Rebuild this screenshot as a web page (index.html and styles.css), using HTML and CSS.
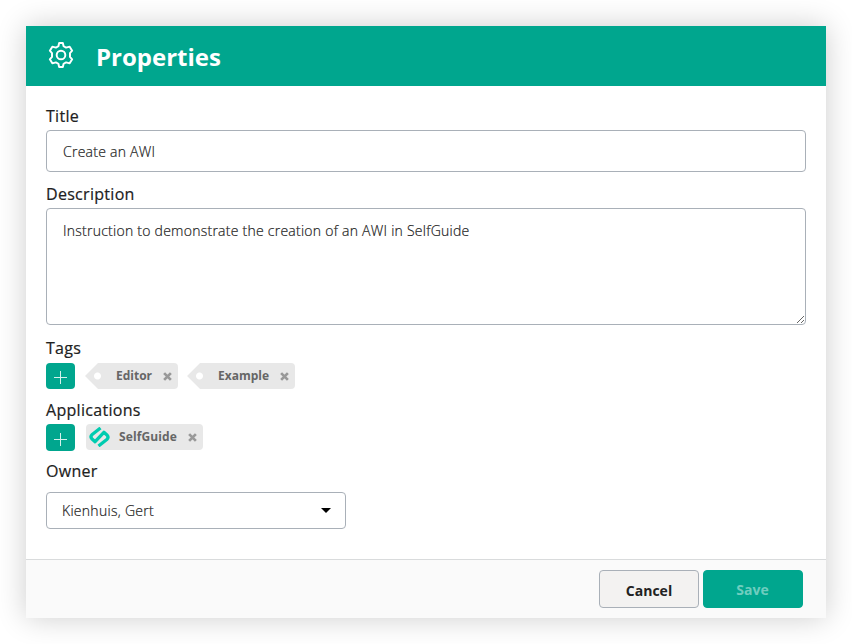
FILE: index.html
```html
<!DOCTYPE html>
<html lang="en">
<head>
  <meta charset="UTF-8">
  <meta name="viewport" content="width=device-width, initial-scale=1">
  <title>Properties</title>
  <link rel="stylesheet" href="styles.css">
</head>
<body>
  <form class="dialog">
    <div class="dialog-header">
      <svg class="gear" viewBox="0 0 24 24" fill="none" stroke="#fff" stroke-width="1.8" stroke-linejoin="round">
        <path d="M10.300 .9h3.400l.7 3 2.300 1.300 3.300-.9 2.300 3.700-2 2.200v3.600l2 2.200-2.300 3.700-3.300-.9-2.300 1.300-.7 3h-3.400l-.7-3-2.300-1.300-3.300.9L1.700 16l2-2.200v-3.600L1.700 8 4 4.300l3.300.9 2.300-1.300z"/>
        <circle cx="12" cy="12" r="4"/>
      </svg>
      <h1 class="dialog-title">Properties</h1>
    </div>

    <div class="dialog-body">
      <label class="label" for="title">Title</label>
      <input class="input" id="title" type="text" value="Create an AWI">

      <label class="label" for="description">Description</label>
      <textarea class="input textarea" id="description">Instruction to demonstrate the creation of an AWI in SelfGuide</textarea>

      <div class="label">Tags</div>
      <div class="chips tags">
        <button type="button" class="add-btn" aria-label="Add tag">
          <svg viewBox="0 0 13 13" stroke="#d5f1ec"><path d="M6.500 0v13M0 6.500h13"/></svg>
        </button>
        <div class="tag">
          <span>Editor</span>
          <svg class="remove" viewBox="0 0 8 8"><path d="M1 1l6 6M7 1L1 7"/></svg>
        </div>
        <div class="tag">
          <span>Example</span>
          <svg class="remove" viewBox="0 0 8 8"><path d="M1 1l6 6M7 1L1 7"/></svg>
        </div>
      </div>

      <div class="label">Applications</div>
      <div class="chips apps">
        <button type="button" class="add-btn" aria-label="Add application">
          <svg viewBox="0 0 13 13" stroke="#d5f1ec"><path d="M6.500 0v13M0 6.500h13"/></svg>
        </button>
        <div class="app">
          <svg class="app-logo" viewBox="0 0 21 20" fill="none" stroke="#00ccb0" stroke-width="3.300" stroke-linejoin="round">
            <path d="M11.500 1L3.200 7.500Q1 9.500 2.800 11.700l3.300 3 8.800-9.400 3.300 3q1.800 2.200-.4 4.200L9.500 19"/>
          </svg>
          <span>SelfGuide</span>
          <svg class="remove" viewBox="0 0 8 8"><path d="M1 1l6 6M7 1L1 7"/></svg>
        </div>
      </div>

      <div class="label">Owner</div>
      <div class="select" tabindex="0">
        <span>Kienhuis, Gert</span>
        <span class="caret"></span>
      </div>
    </div>

    <div class="dialog-footer">
      <button type="button" class="btn cancel">Cancel</button>
      <button type="submit" class="btn save" disabled>Save</button>
    </div>
  </form>
</body>
</html>
```
FILE: styles.css
```css
* {
  box-sizing: border-box;
}
body {
  margin: 0;
  padding: 26px;
  height: 644px;
  background: #fff;
  color: #212121;
  font-family: "Open Sans", sans-serif;
  overflow: hidden;
}
.dialog {
  display: flex;
  flex-direction: column;
  width: 800px;
  height: 592px;
  background: #fff;
  box-shadow: 0 0 28px rgba(0,0,0,0.2);
}
.dialog-header {
  display: flex;
  align-items: center;
  height: 60px;
  padding: 0 22px;
  background: #00a68e;
}
.gear {
  width: 26px;
  height: 26px;
  margin-bottom: 2px;
}
.dialog-title {
  margin: 0 0 0 22px;
  color: #fff;
  font-size: 24px;
  font-weight: 700;
}
.dialog-body {
  flex: 1;
  padding: 18px 20px 0;
}
.label {
  display: block;
  margin-bottom: 2px;
  font-size: 16px;
  line-height: 24px;
  letter-spacing: 0.3px;
  -webkit-text-stroke: 0.2px #212121;
}
.input {
  display: block;
  width: 100%;
  height: 42px;
  margin-bottom: 10px;
  padding: 0 16px;
  border: 1px solid #a9b0b8;
  border-radius: 4px;
  background: #fff;
  color: #222;
  font-family: inherit;
  font-size: 14px;
  font-weight: 300;
  letter-spacing: 0.25px;
  -webkit-text-stroke: 0.2px #222;
  outline: none;
}
.textarea {
  height: 117px;
  margin-bottom: 11px;
  padding-top: 12px;
  line-height: 20px;
}
.chips {
  display: flex;
  gap: 9px;
}
.tags {
  margin: 3px 0 9px;
}
.apps {
  margin-bottom: 8px;
}
.add-btn {
  display: flex;
  align-items: center;
  justify-content: center;
  width: 29px;
  height: 26px;
  margin-right: 1px;
  padding: 3px 0 0;
  border: none;
  border-radius: 4px;
  background: #00a68e;
}
.add-btn svg {
  width: 13px;
  height: 13px;
}
.apps .add-btn {
  height: 27px;
}
.tag,
.app {
  display: flex;
  align-items: center;
  height: 26px;
  padding-right: 6px;
  border-radius: 4px;
  background: #e8e8e8;
  color: #666;
  font-size: 12px;
  font-weight: 700;
}
.tag span,
.app span {
  margin-bottom: 1px;
}
.tag {
  padding-left: 31px;
  background: radial-gradient(circle at 12.5px 13px, #fff 3px, #e8e8e8 4px);
  clip-path: polygon(0 50%, 13px 0, 100% 0, 100% 100%, 13px 100%);
}
.app {
  margin-left: 1px;
  padding-left: 3px;
}
.app-logo {
  width: 21px;
  height: 20px;
  margin-right: 9px;
}
.app span {
  letter-spacing: 0.1px;
}
.remove {
  width: 9px;
  height: 9px;
  margin-left: 11px;
  fill: none;
  stroke: #999;
  stroke-width: 2.4;
}
.select {
  display: flex;
  align-items: center;
  justify-content: space-between;
  width: 300px;
  height: 37px;
  margin-top: 9px;
  padding: 0 14px 0 15px;
  border: 1px solid #a9b0b8;
  border-radius: 4px;
  color: #222;
  font-size: 14px;
  font-weight: 300;
  letter-spacing: 0.28px;
  -webkit-text-stroke: 0.2px #222;
}
.caret {
  border: 5px solid transparent;
  border-top-color: #000;
  border-bottom: none;
}
.dialog-footer {
  display: flex;
  justify-content: flex-end;
  gap: 4px;
  height: 59px;
  padding: 10px 23px 0;
  border-top: 1px solid #d9dbdc;
  background: #fafafa;
}
.btn {
  width: 100px;
  height: 38px;
  padding: 2px 0 0;
  border: 1px solid #a9b0b8;
  border-radius: 4px;
  background: #f3f2f1;
  color: #222;
  font-family: inherit;
  font-size: 14px;
  font-weight: 700;
}
.save {
  padding: 1px 1px 0 0;
  border-color: #00a68e;
  background: #00a68e;
  color: #6fcdbf;
}
```
